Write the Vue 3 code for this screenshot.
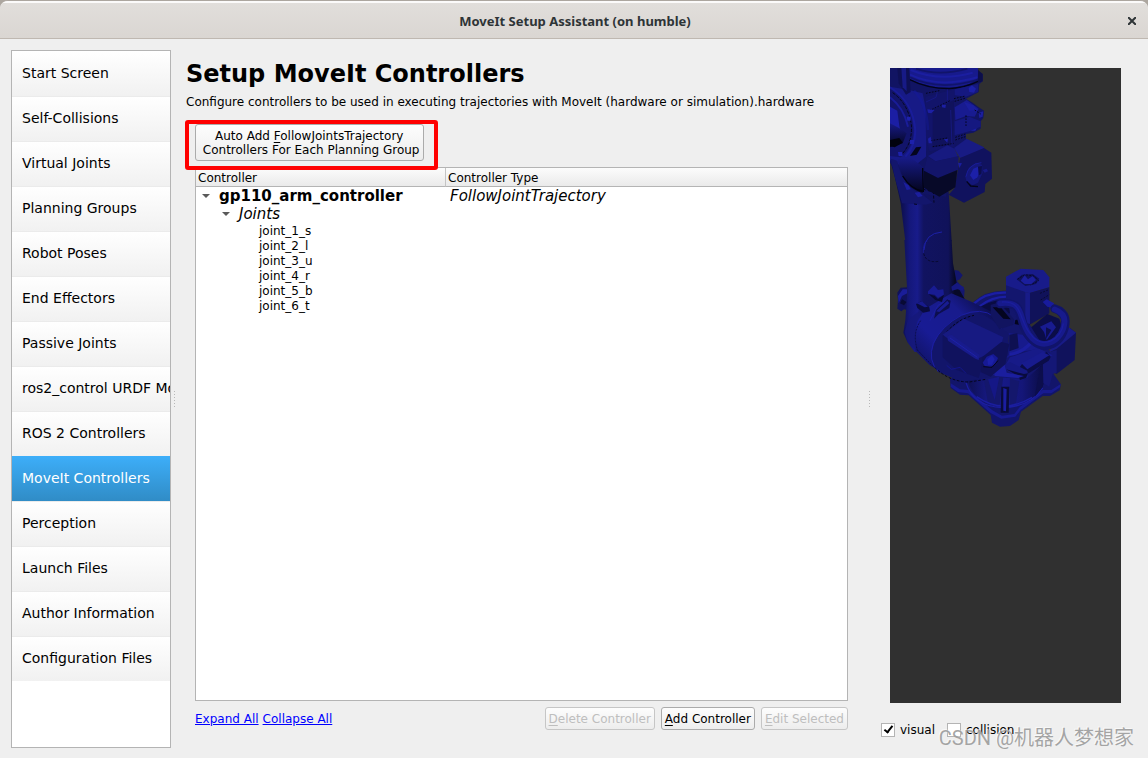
<script setup>
import { computed, ref } from 'vue'

const steps = [
  'Start Screen',
  'Self-Collisions',
  'Virtual Joints',
  'Planning Groups',
  'Robot Poses',
  'End Effectors',
  'Passive Joints',
  'ros2_control URDF Model',
  'ROS 2 Controllers',
  'MoveIt Controllers',
  'Perception',
  'Launch Files',
  'Author Information',
  'Configuration Files'
]

const joints = ['joint_1_s', 'joint_2_l', 'joint_3_u', 'joint_4_r', 'joint_5_b', 'joint_6_t']

const current = ref('MoveIt Controllers')
const controllerOpen = ref(true)
const jointsOpen = ref(true)
const showVisual = ref(true)
const showCollision = ref(false)

const visibleJoints = computed(() => (controllerOpen.value && jointsOpen.value ? joints : []))

const setExpanded = (value) => {
  controllerOpen.value = value
  jointsOpen.value = value
}
</script>

<template>
  <div class="window">
    <header class="titlebar">
      <span class="title">MoveIt Setup Assistant (on humble)</span>
      <button class="close" type="button" aria-label="Close">
        <svg width="8" height="8" viewBox="0 0 8 8"><path d="M0 0 8 8M8 0 0 8" /></svg>
      </button>
    </header>

    <div class="body">
      <nav class="steps">
        <button
          v-for="step in steps"
          :key="step"
          type="button"
          class="step"
          :class="{ active: step === current }"
          @click="current = step"
        >{{ step }}</button>
      </nav>

      <div class="splitter"></div>

      <main class="panel">
        <h1>Setup MoveIt Controllers</h1>
        <p class="intro">Configure controllers to be used in executing trajectories with MoveIt (hardware or simulation).hardware</p>

        <div class="content">
          <div class="auto-add">
            <button type="button" class="btn tall">Auto Add <u>F</u>ollowJointsTrajectory<br>&nbsp;Controllers For Each Planning Group</button>
            <div class="marker"></div>
          </div>

          <div class="tree">
            <table>
              <thead>
                <tr>
                  <th class="first">Controller</th>
                  <th>Controller Type</th>
                </tr>
              </thead>
              <tbody>
                <tr class="group">
                  <td class="name">
                    <button type="button" class="arrow" aria-label="Toggle controller" @click="controllerOpen = !controllerOpen"></button>
                    <span>gp110_arm_controller</span>
                  </td>
                  <td class="type">FollowJointTrajectory</td>
                </tr>
                <tr v-if="controllerOpen" class="group">
                  <td class="sub">
                    <button type="button" class="arrow" aria-label="Toggle joints" @click="jointsOpen = !jointsOpen"></button>
                    <span>Joints</span>
                  </td>
                  <td></td>
                </tr>
                <tr v-for="joint in visibleJoints" :key="joint">
                  <td class="joint">{{ joint }}</td>
                  <td></td>
                </tr>
              </tbody>
            </table>
          </div>

          <div class="actions">
            <a href="#" @click.prevent="setExpanded(true)">Expand All</a>
            <a href="#" @click.prevent="setExpanded(false)">Collapse All</a>
            <span class="spacer"></span>
            <button type="button" class="btn" disabled><u>D</u>elete Controller</button>
            <button type="button" class="btn"><u>A</u>dd Controller</button>
            <button type="button" class="btn" disabled><u>E</u>dit Selected</button>
          </div>
        </div>
      </main>

      <div class="splitter wide"></div>

      <aside class="preview">
        <div class="viewport">
          <svg v-show="showVisual" width="231" height="372" viewBox="0 0 231 372">
            <defs>
              <linearGradient id="arm" gradientUnits="userSpaceOnUse" x1="46" x2="206" y1="0" y2="0">
                <stop offset="0" stop-color="#0d0f4e" />
                <stop offset=".15" stop-color="#14177a" />
                <stop offset=".3" stop-color="#181b8a" />
                <stop offset=".42" stop-color="#111360" />
                <stop offset=".88" stop-color="#10125a" />
                <stop offset="1" stop-color="#070927" />
              </linearGradient>
              <linearGradient id="drum" x1="0" y1="1" x2="1" y2="0">
                <stop offset="0" stop-color="#0c0e48" />
                <stop offset=".35" stop-color="#181b94" />
                <stop offset=".65" stop-color="#181b8c" />
                <stop offset="1" stop-color="#03041a" />
              </linearGradient>
              <linearGradient id="fade" x1="0" y1="0" x2="0" y2="1">
                <stop offset="0" stop-color="#171a86" />
                <stop offset="1" stop-color="#03041a" />
              </linearGradient>
              <linearGradient id="pot" x1="0" x2="1">
                <stop offset="0" stop-color="#0d0f4c" />
                <stop offset=".35" stop-color="#181b8e" />
                <stop offset=".7" stop-color="#141678" />
                <stop offset="1" stop-color="#090b3c" />
              </linearGradient>
            </defs>

            <!-- base, lower arm and turntable -->
            <g transform="translate(-4 172) scale(.33333)">
              <path fill="#12156a" d="M192 416 218 408 500 398 524 432 522 450 492 468 470 468 405 515 398 540 372 558 342 560 318 548 314 525 248 466 222 464 194 444Z" />
              <path fill="#171a90" d="M194 430 222 448 250 450 318 510 348 527 385 522 402 500 470 450 496 450 524 432 522 442 496 460 472 460 404 510 388 530 346 536 314 519 246 460 216 456 194 440Z" />
              <path fill="url(#pot)" d="M238 380 248 430Q268 495 350 502 440 500 470 440L482 340 340 300Z" />
              <path fill="#14176c" d="M290 400 306 490 340 500 352 410ZM372 415 400 424 390 488 372 496Z" />
              <path fill="#1518a0" opacity=".5" d="M306 418 340 410 326 480Z" />
              <path fill="none" stroke="#1b1ea0" stroke-width="4" d="M240 428Q262 500 350 503 434 500 470 444M272 470Q350 525 438 472" />
              <path fill="#090b3a" d="M346 440 370 440 368 518 344 518Z" />
              <path fill="#1b1ea0" d="M352 444 362 448 360 514 352 512Z" />
              <path fill="#0c0e4c" d="M472 352 480 418 466 446 446 470 455 420Z" />
              <path fill="#10125c" d="M484 348 552 264 570 278 566 360 512 402 484 388Z" />
              <path fill="#181b86" d="M484 340 548 262 570 278 512 326Z" />
              <path fill="#141776" d="M470 342 512 330 512 398 500 402 490 440 472 430Z" />

              <!-- turntable deck -->
              <path fill="#13166c" d="M262 186Q300 150 362 152L420 240 490 330 494 350 420 418 340 412 330 370 370 350 368 290Z" />
              <path fill="none" stroke="#1b1ea4" stroke-width="7" d="M260 194Q300 155 362 158M280 200Q316 170 364 170" />
              <path fill="#0a0c42" d="M272 210Q312 176 366 182L372 220 314 240Z" />
              <path fill="#171a8c" d="M368 280 410 284Q425 308 466 326L370 340Z" />
              <path fill="#0e1052" d="M370 284 394 280 398 324 370 334Z" />
              <path fill="#1b1ea0" d="M370 338Q405 334 430 306L438 312Q410 344 370 348Z" />
              <path fill="#171a88" d="M372 352 456 324 500 346 420 402 358 376Z" />
              <path fill="#0b0d48" d="M398 386 408 372 482 336 494 350 488 362 428 400Z" />
              <path fill="#181b8e" d="M406 370 470 336 490 346 424 388Z" />
              <path fill="#151880" d="M356 374 372 366 424 392 426 412 408 420 360 390Z" />
              <path fill="#090b3c" d="M360 388 398 408 402 420 420 414 426 400 414 402Z" />
              <path fill="#1b1e9e" d="M326 400 356 374 362 398 414 408 396 414 326 408Z" />

              <!-- lower arm -->
              <path fill="#10125c" d="M34 158 44 143 64 142 64 210 54 208 46 214 34 206 36 180Z" />
              <path fill="#1a1d98" d="M36 168 50 148 64 148 64 160 48 168 38 190Z" />
              <path fill="#080a34" d="M48 178 62 186 54 196 42 190Z" />
              <path fill="#13166e" d="M207 90 218 92 230 106 222 118 212 122 236 150 234 174 180 170 184 120Z" />
              <path fill="url(#arm)" d="M55 0 197 0 201 70 214 138 240 184 210 260 140 330 86 336 64 306 52 278 58 240 64 160Z" />
              <path fill="url(#drum)" d="M92 250 116 208 196 160 258 186 318 216 350 270 320 400 230 424 170 400 130 374 88 332Z" />
              <path fill="#151878" opacity=".75" d="M66 240 104 210 90 260 88 328 66 308 56 276Z" />
              <path fill="none" stroke="#070930" stroke-width="2" stroke-dasharray="6 3" d="M104 242Q78 280 94 330M94 330 144 382" />
              <path fill="none" stroke="#1d21aa" stroke-width="2" d="M112 40Q110 6 128 0M132 242 156 196 190 178" />
              <path fill="none" stroke="#05061e" stroke-width="2" stroke-dasharray="8 4" d="M113 40Q120 70 158 64" />
              <path fill="#181b92" d="M126 154 144 136 156 150 172 148 174 164 156 174 146 164 126 162Z" />
              <path fill="#080a36" d="M128 162 146 168 156 178 174 164 168 186 148 180Z" />
              <path fill="#151880" d="M196 140 212 128 234 142 232 152 214 148 198 152Z" />
              <path fill="#090b3e" d="M90 192 106 184 130 202 132 214 112 218 94 204Z" />
              <path fill="#171a8c" d="M92 190 108 184 126 200 116 202Z" />
              <path fill="#0d0f4e" d="M144 236 150 210 184 178 194 182 190 204 158 222Z" />
              <path fill="#181b90" d="M150 214 184 182 190 190 160 216Z" />

              <!-- shoulder motor -->
              <path fill="#12156a" d="M136 354Q140 270 226 226 288 204 336 256L368 282 368 344 310 412 228 426 158 396Z" />
              <path fill="none" stroke="#1b1ea2" stroke-width="3" d="M158 396Q124 362 142 310 166 258 226 226 286 200 324 230L346 266" />
              <path fill="none" stroke="#04051e" stroke-width="3" stroke-dasharray="8 5" d="M174 286Q210 238 264 226M146 382Q190 426 250 426L300 418" />
              <path fill="#171a82" d="M170 284 234 236 352 292 348 306 298 346 270 358Z" />
              <path fill="#10125e" d="M170 286 276 356 296 348 278 414 212 390 170 352Z" />
              <path fill="#181b8c" d="M184 290 196 284 280 344 278 360 268 356 186 302Z" />
              <path fill="none" stroke="#1d21a8" stroke-width="3" d="M192 294 274 352" />
              <path fill="#0f1158" d="M290 350 346 306 370 312 358 372 314 410 284 396Z" />
              <path fill="#161994" d="M290 368 302 350 322 342 336 354 328 372 312 382 296 378Z" />
              <path fill="#1c20a8" d="M304 358 318 346 326 358 318 374 306 374Z" />
              <path fill="none" stroke="#05061e" stroke-width="3" d="M292 380 318 382 336 362" />
              <path fill="none" stroke="#1417a0" stroke-width="2" d="M182 376 196 388 222 382 240 400" />

              <!-- waist motor -->
              <path fill="#111460" d="M314 194 340 188 384 238 382 254 340 268 314 226Z" />
              <path fill="#04051e" d="M320 202 344 202 374 238 352 236ZM388 240 402 238 404 256 386 252Z" />
              <path fill="#181b8a" d="M360 110 404 86 472 90 490 112 490 142 430 160 360 142Z" />
              <path fill="#13166e" d="M360 136 428 160 428 256 396 238 360 184Z" />
              <path fill="#10125a" d="M428 160 490 142 490 220 428 256Z" />
              <path fill="#181b88" d="M418 156 432 160 432 252 418 248Z" />
              <path fill="#0f1158" d="M392 118 408 104 440 102 460 116 450 132 418 138Z" />
              <path fill="#1b1e9c" d="M404 122 416 106 426 118 440 108 450 120 436 132 416 132Z" />
              <path fill="none" stroke="#05061e" stroke-width="2" stroke-dasharray="6 4" d="M394 118 416 104 444 108 458 122 434 136M462 160 486 150M464 180 490 164" />
              <path fill="#181b9c" d="M470 186 482 178 504 190 500 204 484 200Z" />

              <!-- cable loop -->
              <path fill="#0b0d48" d="M436 262 484 222 520 236 530 270 500 302 462 304Z" />
              <path fill="#181b90" d="M462 260 496 244 510 262 482 300 474 276Z" />
              <path fill="#0c0e4a" d="M480 262 496 270 480 296Z" />
              <path fill="none" stroke="#11146a" stroke-width="26" stroke-linecap="round" d="M342 192C420 180 394 240 426 284 470 350 538 304 538 244 538 224 522 210 506 206" />
              <path fill="none" stroke="#171a8c" stroke-width="17" stroke-linecap="round" d="M342 190C420 180 396 240 430 284 470 342 534 298 536 244 536 226 522 214 506 208" />
              <path fill="none" stroke="#1b1e9e" stroke-width="4" d="M348 186C412 182 398 240 432 280 470 334 528 296 532 250" />
            </g>

            <!-- wrist and forearm -->
            <g transform="translate(-4 -8) scale(.33333)">
              <path fill="url(#arm)" d="M12 300 120 330 188 395 197 544 58 544 44 430 26 350Z" />
              <path fill="#111463" d="M12 24 276 24 278 36 290 42 290 64 280 72 278 96 256 108 240 116 260 128 278 142 294 152 292 174 284 184 284 206 262 218 240 222 240 244 200 270 180 410 100 402 60 384 12 308Z" />
              <path fill="#171a86" d="M12 80 70 90 110 100 122 160 120 290 70 330 12 300Z" />
              <path fill="#12146a" d="M118 110 206 88 206 262 130 274 120 230Z" />
              <path fill="#10125c" d="M140 150 204 120 202 254 140 262Z" />

              <!-- forearm cap -->
              <path fill="#171a8c" d="M64 24 276 24 276 54 250 72 206 82 150 82 96 68 64 56Z" />
              <path fill="none" stroke="#1b1ea0" stroke-width="6" d="M74 30Q160 66 260 38M72 44Q160 86 274 52" />
              <path fill="none" stroke="#11146a" stroke-width="5" d="M90 26Q160 50 244 26M72 52Q160 94 272 60" />
              <path fill="none" stroke="#03041a" stroke-width="4" d="M70 58Q124 86 190 86 240 82 276 64" />
              <path fill="#0e1054" d="M34 24 70 24 74 96 60 104 38 70Z" />
              <path fill="#171a86" d="M46 24 60 24 62 94 50 82Z" />
              <path fill="#0c0e4a" d="M276 30 290 42 290 64 276 68Z" />
              <path fill="#151880" d="M206 88 276 72 276 96 240 110 206 106Z" />
              <path fill="#1c20a8" d="M248 84 258 76 270 86 264 98 250 96ZM254 200 262 190 274 200 268 212 256 212Z" />

              <!-- joint disc -->
              <path fill="#12146a" d="M12 82Q72 118 82 200 88 260 44 292L12 288Z" />
              <path fill="none" stroke="#191c98" stroke-width="6" d="M12 82Q82 126 88 212 88 258 58 290M12 112Q54 144 66 200" />
              <path fill="none" stroke="#06071f" stroke-width="3" stroke-dasharray="10 4" d="M20 98Q66 130 76 194 80 246 50 280" />
              <path fill="#1b1ea4" d="M12 140 34 152 40 198 48 228 12 212Z" />
              <path fill="url(#fade)" d="M12 190 46 208 62 220 50 250 12 262Z" />
              <path fill="#01020e" d="M12 240 40 234 50 248 26 262 12 258Z" />
              <path fill="#04051e" d="M72 288 90 262 106 260 92 284Z" />
              <path fill="none" stroke="#1518a0" stroke-width="8" opacity=".4" d="M84 92Q122 130 126 210" />
              <path fill="#1d21ac" d="M62 170 74 170 74 182 64 182ZM72 240 84 240 84 252 72 252ZM36 276 48 276 50 288 38 288Z" />

              <!-- flanges with bolts -->
              <path fill="#181b90" d="M206 142 242 120 278 146 266 170 240 168 208 180Z" />
              <path fill="#151880" d="M206 184 250 170 284 184 284 200 250 214 206 226Z" />
              <path fill="#1b1e9e" d="M234 126 262 136 276 150 250 152ZM278 158 292 154 290 170 280 174Z" />
              <path fill="none" stroke="#04051e" stroke-width="3" stroke-dasharray="5 4" d="M204 116 238 108M206 124 240 114M208 232 238 222M208 240 238 230M130 152 192 122M134 242 184 234M140 260 204 250M120 100 160 92M240 166 240 202M266 150 284 162" />
              <path fill="#1c1fa4" d="M126 236 134 230 138 250 128 250ZM168 134 180 134 178 144 168 142ZM124 148 146 150 136 160 126 158ZM174 238 186 236 184 248Z" />
              <path fill="none" stroke="#181b90" stroke-width="2" d="M120 126 150 112 154 96M184 88 184 120M194 150 198 256" />

              <!-- elbow fork -->
              <path fill="url(#fade)" d="M34 298 76 294 112 322 110 398Q66 388 46 342Z" />
              <path fill="#13166c" d="M14 296 34 302Q48 382 110 404L140 428 120 434 48 430 26 350Z" />
              <path fill="none" stroke="#02030f" stroke-width="4" d="M50 348Q74 388 112 394L110 324" />
              <path fill="#1b1e9e" d="M52 366 68 376 74 388 62 390ZM86 398 100 396 110 408 96 412ZM114 382 122 384 120 394Z" />
              <path fill="none" stroke="#04051e" stroke-width="3" stroke-dasharray="9 5" d="M112 388 142 396 144 428M84 432 98 434" />

              <!-- elbow motor -->
              <path fill="#181b84" d="M204 264 242 236 294 262 294 276 222 294Z" />
              <path fill="#10125e" d="M222 294 294 264 316 278 318 356 298 372 296 396 234 428 188 404 206 384Z" />
              <path fill="#171a80" d="M126 288 184 256 206 266 216 290 148 304Z" />
              <path fill="#13156a" d="M124 290 150 304 218 288 216 330 156 354 114 332Z" />
              <path fill="#070928" d="M114 332 156 354 214 330 208 382 160 410 114 384Z" />
              <path fill="#1b1e9e" d="M216 308 228 310 220 324Z" />
              <path fill="#14177a" d="M238 350 248 324 270 308 288 314 290 338 276 368 260 376 242 366Z" />
              <path fill="#1c20a8" d="M252 346 262 326 276 320 284 334 274 352 262 360Z" />
              <path fill="#0c0e4c" d="M276 320 288 318 286 342 278 346Z" />
              <path fill="none" stroke="#191c98" stroke-width="3" d="M240 350Q246 312 286 308" />
              <path fill="none" stroke="#04051a" stroke-width="4" d="M242 364 254 378 276 380" />
              <path fill="#171a86" d="M290 330 302 326 306 334 296 338Z" />
              <path fill="none" stroke="#1c20a8" stroke-width="3" d="M114 570Q116 520 168 516" />
            </g>
          </svg>
        </div>
        <div class="toggles">
          <label><input v-model="showVisual" type="checkbox"><span>visual</span></label>
          <label><input v-model="showCollision" type="checkbox"><span>collision</span></label>
        </div>
      </aside>
    </div>

    <div class="watermark">CSDN @机器人梦想家</div>
  </div>
</template>

<style>
  body {
    margin: 0;
    background: #aca69f;
  }
</style>

<style scoped>
  .window {
    position: relative;
    box-sizing: border-box;
    min-height: 100vh;
    display: flex;
    flex-direction: column;
    border-top: 1px solid #aca69f;
    border-radius: 8px 8px 0 0;
    background: #efefef;
    overflow: hidden;
    font-family: "DejaVu Sans", "Noto Sans CJK SC", sans-serif;
    font-size: 12px;
    line-height: 15px;
    color: #000;
  }

  button {
    font: inherit;
    color: inherit;
  }

  .titlebar {
    display: flex;
    align-items: center;
    box-sizing: border-box;
    height: 38px;
    padding: 0 8px 0 26px;
    border-top: 2px solid #fbfafa;
    border-bottom: 1px solid #bfb8b1;
    background: linear-gradient(#e1dedb, #dad6d2);
  }

  .title {
    flex: 1;
    text-align: center;
    font-family: "Noto Sans", sans-serif;
    font-size: 13px;
    line-height: 20px;
    font-weight: 700;
    color: #2e3436;
  }

  .close {
    display: flex;
    padding: 4px;
    border: 0;
    background: none;
  }

  .close path {
    stroke: #2e3436;
    stroke-width: 2;
  }

  .body {
    flex: 1;
    display: flex;
    padding: 11px 18px 10px 11px;
  }

  .steps {
    box-sizing: border-box;
    flex: none;
    width: 160px;
    border: 1px solid #b4b4b4;
    background: #fff;
    overflow: hidden;
  }

  .step {
    display: block;
    box-sizing: border-box;
    width: 100%;
    height: 45px;
    padding: 0 0 0 10px;
    border: 0;
    background: linear-gradient(#fff, #f1f1f1);
    font-size: 14px;
    text-align: left;
    white-space: nowrap;
    overflow: hidden;
  }

  .step + .step {
    box-shadow: inset 0 1px #ebebeb;
  }

  .step.active {
    box-shadow: none;
    background: linear-gradient(#3daef9, #308cc6);
    color: #fff;
  }

  .splitter {
    flex: none;
    align-self: center;
    width: 1px;
    height: 17px;
    margin: 0 11px 0 3px;
    background: repeating-linear-gradient(#b8b8b8 0 1px, transparent 1px 3px);
  }

  .splitter.wide {
    margin: 0 11px 0 21px;
  }

  .panel {
    flex: 1;
    min-width: 0;
    display: flex;
    flex-direction: column;
    padding: 10px 0 18px;
  }

  h1 {
    margin: 0;
    font-size: 24px;
    line-height: 28px;
  }

  .intro {
    margin: 7px 0 14px;
  }

  .content {
    flex: 1;
    display: flex;
    flex-direction: column;
    gap: 6px;
    margin-left: 9px;
  }

  .auto-add {
    position: relative;
    align-self: flex-start;
  }

  .marker {
    position: absolute;
    inset: -4px -14px -9px -10px;
    border: 4px solid #f00;
    border-radius: 3px;
    pointer-events: none;
  }

  .btn {
    display: block;
    box-sizing: border-box;
    height: 23px;
    padding: 2px 3px 0;
    border: 1px solid #ababab;
    border-radius: 3px;
    background: linear-gradient(#fdfdfd, #ededed);
    white-space: nowrap;
  }

  .btn.tall {
    height: 37px;
    padding: 0 4px 0 3px;
    line-height: 14px;
  }

  .btn u {
    text-underline-offset: 2px;
  }

  .btn:disabled {
    border-color: #c6c6c6;
    color: #bebebe;
  }

  .tree {
    flex: 1;
    border: 1px solid #b4b4b4;
    background: #fff;
  }

  table {
    width: 100%;
    table-layout: fixed;
    border-collapse: separate;
    border-spacing: 0;
  }

  th {
    box-sizing: border-box;
    height: 19px;
    padding: 2px 2px 0;
    border-bottom: 1px solid #b4b4b4;
    background: linear-gradient(#fcfcfc, #eaeaea);
    font-weight: 400;
    text-align: left;
  }

  th.first {
    width: 250px;
    border-right: 1px solid #c4c4c4;
  }

  td {
    height: 15px;
    padding: 0;
  }

  .group td {
    height: 18px;
    font-size: 15px;
    line-height: 18px;
  }

  .name {
    font-weight: 700;
  }

  .type,
  .sub {
    font-style: italic;
  }

  td.type {
    padding-left: 4px;
  }

  td.sub {
    padding: 0 0 1px 20px;
  }

  td.joint {
    padding-left: 63px;
  }

  .name span,
  .sub span {
    display: inline-block;
    vertical-align: top;
  }

  .arrow {
    width: 20px;
    height: 18px;
    margin-right: 3px;
    padding: 0;
    border: 0;
    background: none;
    vertical-align: top;
  }

  .arrow::before {
    content: "";
    display: block;
    width: 0;
    margin: 0 auto;
    border: 4px solid transparent;
    border-top-color: #5a5a5a;
    border-bottom: 0;
  }

  .actions {
    display: flex;
    align-items: center;
    gap: 6px;
  }

  .actions a {
    padding-top: 2px;
    color: #00f;
  }

  .actions a + a {
    margin-left: -2px;
  }

  .spacer {
    flex: 1;
  }

  .preview {
    flex: none;
    display: flex;
    flex-direction: column;
    width: 249px;
    padding-top: 18px;
  }

  .viewport {
    flex: 1;
    margin: 0 9px;
    background: #303030;
    overflow: hidden;
  }

  .viewport svg {
    display: block;
  }

  .toggles {
    display: flex;
    gap: 12px;
    padding: 18px 0 10px;
  }

  .toggles label {
    display: flex;
    align-items: center;
    gap: 5px;
  }

  .toggles span {
    padding-top: 2px;
  }

  .toggles input {
    appearance: none;
    box-sizing: border-box;
    width: 14px;
    height: 14px;
    margin: 0;
    border: 1px solid #b4b4b4;
    background: #fff;
  }

  .toggles input:checked::before {
    content: "";
    display: block;
    box-sizing: border-box;
    width: 5px;
    height: 9px;
    margin: 0 0 0 4px;
    border: solid #000;
    border-width: 0 2px 2px 0;
    transform: rotate(38deg);
  }

  .watermark {
    position: absolute;
    right: 14px;
    bottom: 6px;
    font-family: Roboto, "Noto Sans CJK SC", sans-serif;
    font-size: 20px;
    line-height: 28px;
    color: rgba(150, 150, 150, 0.85);
    text-shadow: -1px -1px 0 rgba(255, 255, 255, 0.6);
    pointer-events: none;
  }
</style>
